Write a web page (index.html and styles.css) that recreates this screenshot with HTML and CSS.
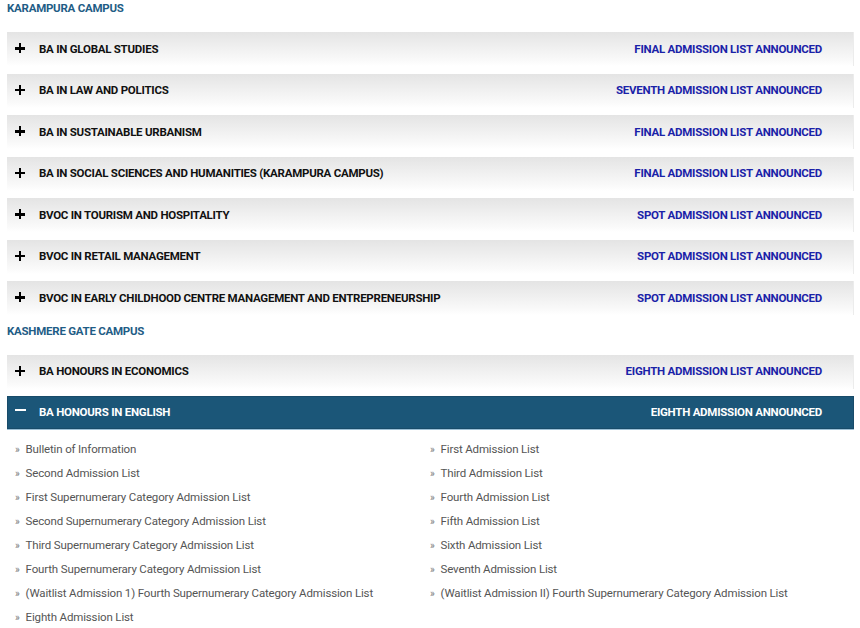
FILE: index.html
```html
<!DOCTYPE html>
<html lang="en">
  <head>
    <meta charset="UTF-8" />
    <title>Admission Lists</title>
    <link rel="stylesheet" href="styles.css">
  </head>
  <body>
    <div class="campus">KARAMPURA CAMPUS</div>
    <div class="course">
      <span class="toggle"></span>
      <span class="course-name">BA IN GLOBAL STUDIES</span>
      <span class="status">FINAL ADMISSION LIST ANNOUNCED</span>
    </div>
    <div class="course">
      <span class="toggle"></span>
      <span class="course-name">BA IN LAW AND POLITICS</span>
      <span class="status">SEVENTH ADMISSION LIST ANNOUNCED</span>
    </div>
    <div class="course">
      <span class="toggle"></span>
      <span class="course-name">BA IN SUSTAINABLE URBANISM</span>
      <span class="status">FINAL ADMISSION LIST ANNOUNCED</span>
    </div>
    <div class="course">
      <span class="toggle"></span>
      <span class="course-name">BA IN SOCIAL SCIENCES AND HUMANITIES (KARAMPURA CAMPUS)</span>
      <span class="status">FINAL ADMISSION LIST ANNOUNCED</span>
    </div>
    <div class="course">
      <span class="toggle"></span>
      <span class="course-name">BVOC IN TOURISM AND HOSPITALITY</span>
      <span class="status">SPOT ADMISSION LIST ANNOUNCED</span>
    </div>
    <div class="course">
      <span class="toggle"></span>
      <span class="course-name">BVOC IN RETAIL MANAGEMENT</span>
      <span class="status">SPOT ADMISSION LIST ANNOUNCED</span>
    </div>
    <div class="course">
      <span class="toggle"></span>
      <span class="course-name">BVOC IN EARLY CHILDHOOD CENTRE MANAGEMENT AND ENTREPRENEURSHIP</span>
      <span class="status">SPOT ADMISSION LIST ANNOUNCED</span>
    </div>

    <div class="campus">KASHMERE GATE CAMPUS</div>
    <div class="course">
      <span class="toggle"></span>
      <span class="course-name">BA HONOURS IN ECONOMICS</span>
      <span class="status">EIGHTH ADMISSION LIST ANNOUNCED</span>
    </div>
    <div class="course open">
      <span class="toggle"></span>
      <span class="course-name">BA HONOURS IN ENGLISH</span>
      <span class="status">EIGHTH ADMISSION ANNOUNCED</span>
    </div>
    <ul class="links">
      <li><a href="#">Bulletin of Information</a></li>
      <li><a href="#">First Admission List</a></li>
      <li><a href="#">Second Admission List</a></li>
      <li><a href="#">Third Admission List</a></li>
      <li><a href="#">First Supernumerary Category Admission List</a></li>
      <li><a href="#">Fourth Admission List</a></li>
      <li><a href="#">Second Supernumerary Category Admission List</a></li>
      <li><a href="#">Fifth Admission List</a></li>
      <li><a href="#">Third Supernumerary Category Admission List</a></li>
      <li><a href="#">Sixth Admission List</a></li>
      <li><a href="#">Fourth Supernumerary Category Admission List</a></li>
      <li><a href="#">Seventh Admission List</a></li>
      <li><a href="#">(Waitlist Admission 1) Fourth Supernumerary Category Admission List</a></li>
      <li><a href="#">(Waitlist Admission II) Fourth Supernumerary Category Admission List</a></li>
      <li><a href="#">Eighth Admission List</a></li>
    </ul>
  </body>
</html>
```

FILE: styles.css
```css
body {
  margin: 0;
  padding: 0 6px 0 7px;
  font-family: Roboto, "Liberation Sans", Arial, sans-serif;
  background: #ffffff;
}
.campus {
  height: 16px;
  line-height: 16px;
  font-size: 11.5px;
  letter-spacing: -0.25px;
  font-weight: bold;
  color: #1f5d86;
  margin-bottom: 16px;
}
.course {
  display: flex;
  align-items: center;
  box-sizing: border-box;
  height: 34px;
  margin-bottom: 7.5px;
  padding: 0 32px 1px 8px;
  background: linear-gradient(to bottom, #e4e4e4, #fafafa 85%, #ffffff);
  box-shadow: inset -1px 0 0 #ececec;
  font-size: 11.5px;
  letter-spacing: -0.25px;
  font-weight: bold;
}
.toggle {
  position: relative;
  width: 10px;
  height: 10px;
  margin: -1px 14px 0 0;
}
.toggle::before,
.toggle::after {
  content: "";
  position: absolute;
  background: #000000;
}
.toggle::before {
  left: 0;
  top: 4px;
  width: 10px;
  height: 2.5px;
}
.toggle::after {
  left: 3.75px;
  top: 0.25px;
  width: 2.5px;
  height: 10px;
}
.course-name {
  flex: 1;
  color: #111111;
}
.status {
  color: #1a22a8;
}
.course.open {
  background: #1b5678;
  box-shadow: inset 0 0 0 1px #184b69;
  border-bottom: 1px solid #9cc0d6;
  margin-bottom: 0;
}
.course.open .toggle {
  width: 12px;
  margin-right: 12px;
}
.course.open .toggle::before {
  width: 11px;
  height: 2px;
  top: 2px;
  background: #ffffff;
}
.course.open .toggle::after {
  display: none;
}
.course.open .course-name,
.course.open .status {
  color: #ffffff;
}
.links {
  list-style: none;
  margin: 0;
  padding: 7px 0 0 8px;
  display: grid;
  grid-template-columns: 415px 1fr;
  font-size: 11.5px;
  letter-spacing: -0.15px;
}
.links li {
  height: 24px;
  line-height: 24px;
  color: #555555;
}
.links li::before {
  content: "»";
  font-size: 10px;
  color: #777777;
  margin-right: 6px;
}
.links a {
  color: #555555;
  text-decoration: none;
}
```
